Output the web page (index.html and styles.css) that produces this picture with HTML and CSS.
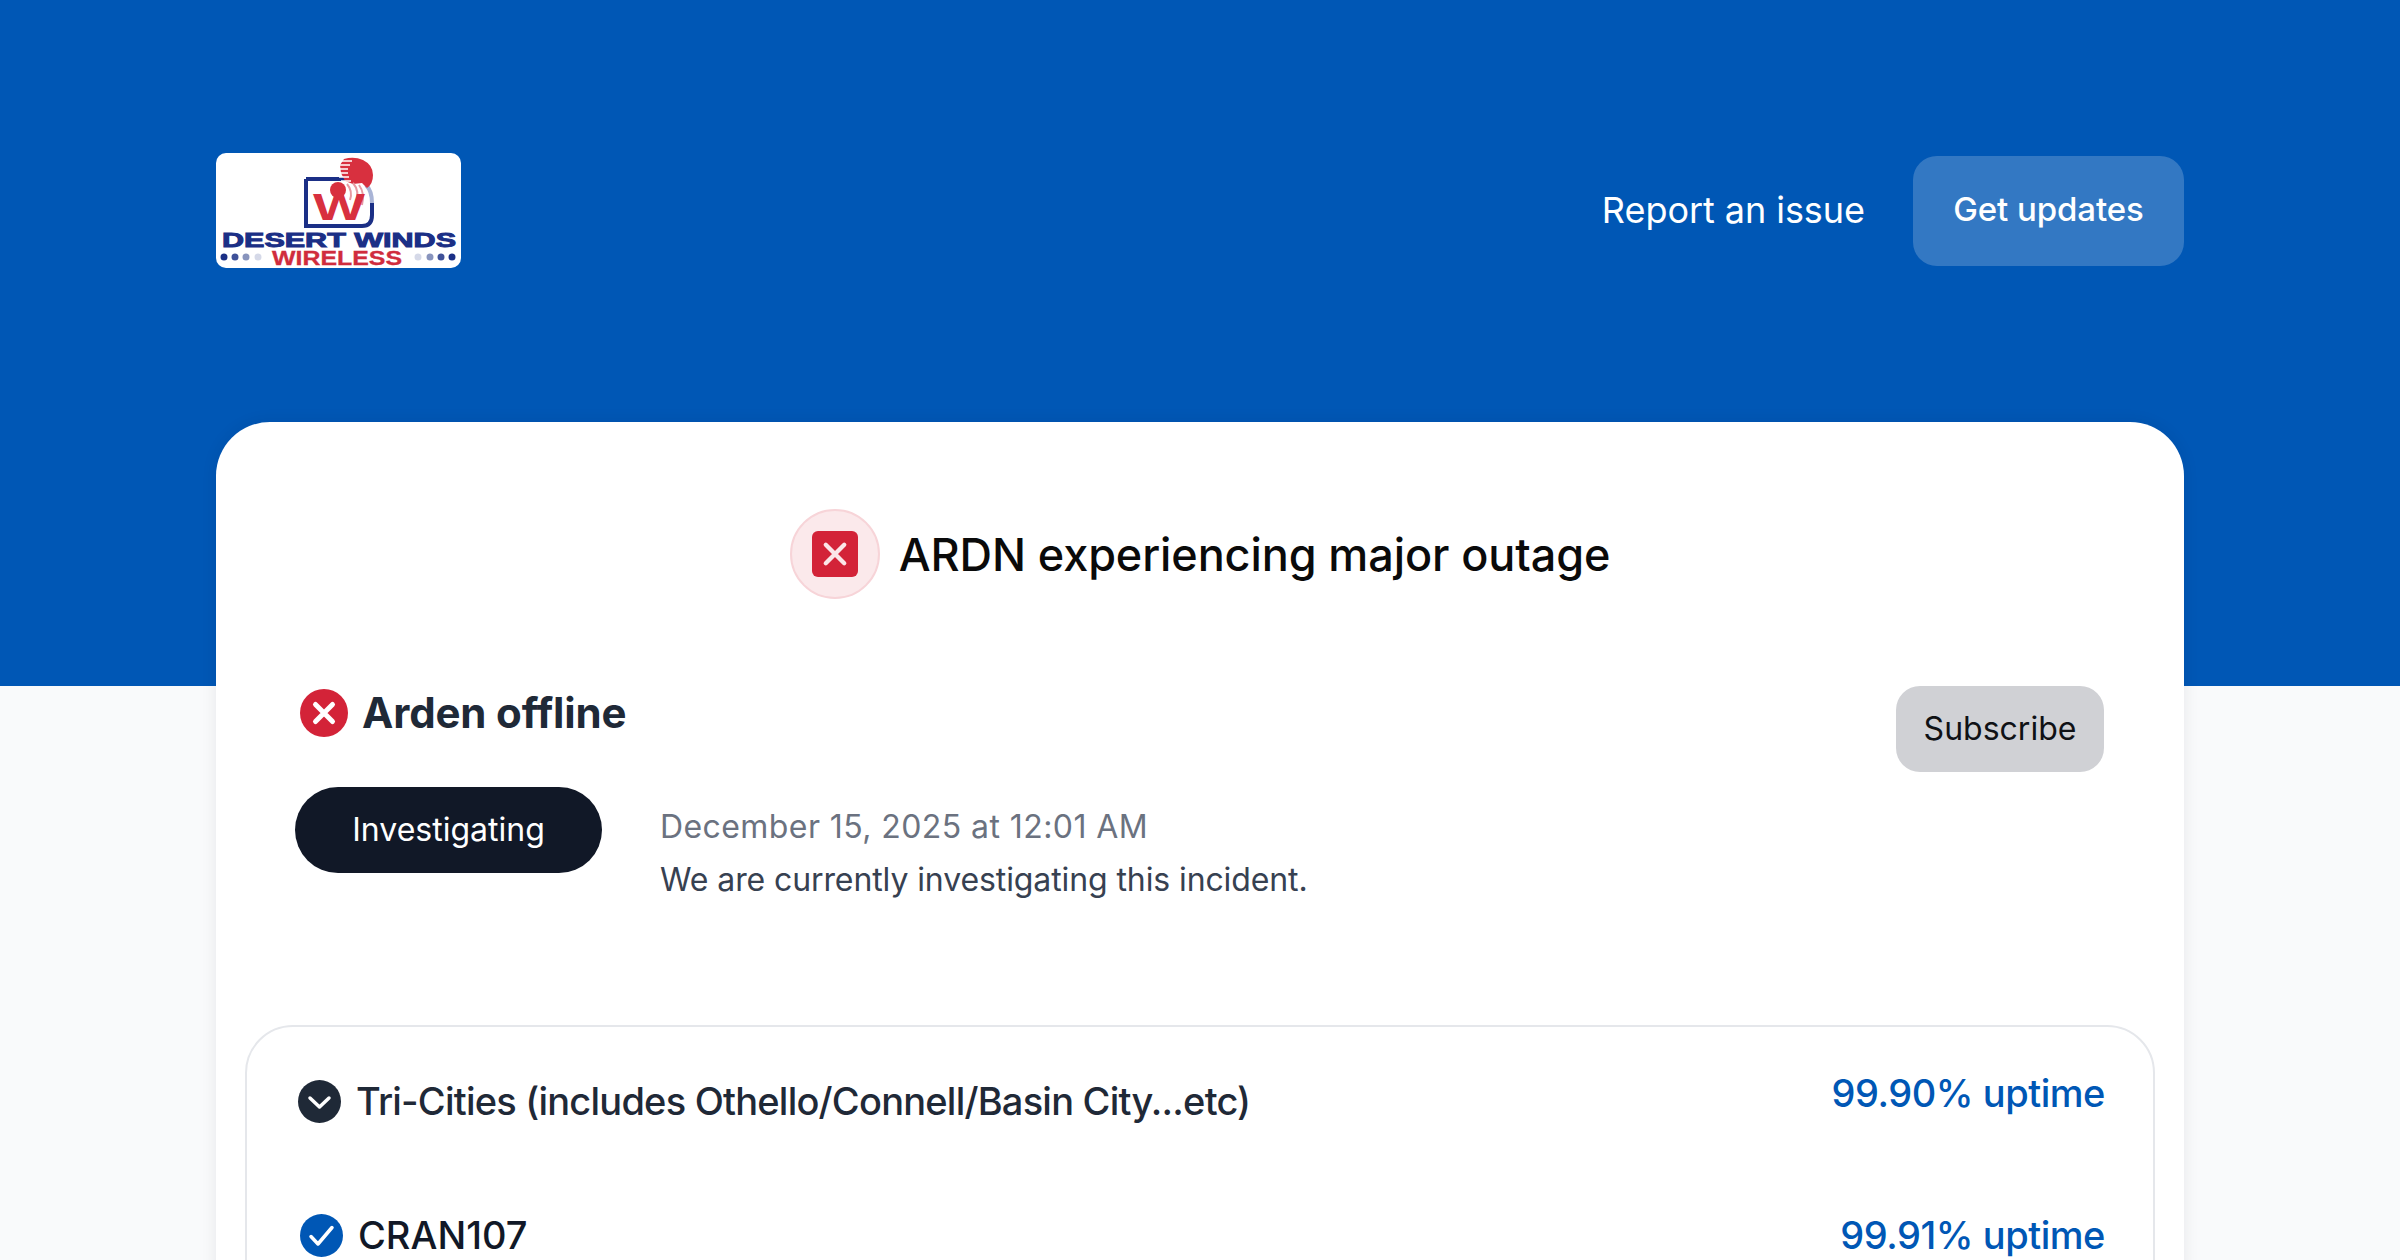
FILE: index.html
```html
<!DOCTYPE html>
<html lang="en">
<head>
<meta charset="utf-8">
<title>Desert Winds Wireless Status</title>
<link rel="stylesheet" href="styles.css">
</head>
<body>
<div class="page">
  <div class="hero">
    <header class="topbar">
      <a class="logo" href="#">
        <svg class="logo-svg" viewBox="0 0 244 115" width="244" height="115">
          <path class="lg-navy-line" d="M90 26H134M90 26V73H146Q156 73 156 62V50"/>
          <path class="lg-fade" d="M150 32Q156 38 156 50"/>
          <path class="lg-red" d="M128 6Q138 3 147 7Q157 12 157 22Q157 31 151 35L146 30L137 31L129 28L125 20L124 12Z"/>
          <path class="lg-comb" d="M124 8H136M123 12H134M122 16H132M122 20H132M123 24H133M125 28H135"/>
          <path class="lg-wave" d="M131 31Q137 38 134 47M137 30Q144 38 140 50M143 32Q149 40 146 52"/>
          <circle class="lg-red" cx="122" cy="37" r="8"/>
          <text class="lg-w" x="123" y="67" text-anchor="middle" textLength="52" lengthAdjust="spacingAndGlyphs">W</text>
          <text class="lg-t1" x="6" y="94" textLength="234" lengthAdjust="spacingAndGlyphs">DESERT WINDS</text>
          <text class="lg-t2" x="56" y="112" textLength="130" lengthAdjust="spacingAndGlyphs">WIRELESS</text>
          <circle class="lg-d1" cx="8" cy="104" r="3.5"/><circle class="lg-d2" cx="19" cy="104" r="3.5"/><circle class="lg-d3" cx="30" cy="104" r="3.5"/><circle class="lg-d4" cx="42" cy="104" r="3.5"/>
          <circle class="lg-d4" cx="202" cy="104" r="3.5"/><circle class="lg-d3" cx="214" cy="104" r="3.5"/><circle class="lg-d2" cx="225" cy="104" r="3.5"/><circle class="lg-d1" cx="236" cy="104" r="3.5"/>
        </svg>
      </a>
      <nav class="nav">
        <a class="nav-link" href="#">Report an issue</a>
        <a class="nav-btn" href="#">Get updates</a>
      </nav>
    </header>
  </div>
  <main class="card">
    <div class="status">
      <span class="status-ring">
        <span class="status-square">
          <svg viewBox="0 0 24 24" width="26" height="26"><path class="x-stroke" d="M3.500 3.500L20.500 20.500M20.500 3.500L3.500 20.500"/></svg>
        </span>
      </span>
      <h1 class="status-title">ARDN experiencing major outage</h1>
    </div>
    <section class="incident">
      <div class="incident-body">
        <h2 class="incident-title">
          <svg class="incident-icon" viewBox="0 0 48 48" width="48" height="48"><circle class="fill-red" cx="24" cy="24" r="24"/><path class="x-stroke-2" d="M15.500 15.500L32.500 32.500M32.500 15.500L15.500 32.500"/></svg>
          Arden offline
        </h2>
        <div class="update">
          <span class="pill">Investigating</span>
          <div class="update-text">
            <div class="update-date">December 15, 2025 at 12:01 AM</div>
            <div class="update-msg">We are currently investigating this incident.</div>
          </div>
        </div>
      </div>
      <a class="subscribe" href="#">Subscribe</a>
    </section>
    <section class="uptime-box">
      <div class="row row-first">
        <div class="row-name row-name-group">
          <svg viewBox="0 0 43 43" width="43" height="43"><circle class="fill-dark" cx="21.5" cy="21.5" r="21.5"/><path class="tick" d="M12 18L21.500 27L31 18"/></svg>
          <span>Tri-Cities (includes Othello/Connell/Basin City...etc)</span>
        </div>
        <span class="row-uptime">99.90% uptime</span>
      </div>
      <div class="row row-second">
        <div class="row-name row-name-item">
          <svg viewBox="0 0 43 43" width="43" height="43"><circle class="fill-blue" cx="21.500" cy="21.500" r="21.500"/><path class="tick" d="M11 22.500L18 30L32 13.500"/></svg>
          <span>CRAN107</span>
        </div>
        <span class="row-uptime">99.91% uptime</span>
      </div>
    </section>
  </main>
</div>
</body>
</html>
```
FILE: styles.css
```css
* { box-sizing: border-box; }
html, body { margin: 0; height: 1260px; overflow: hidden; }
body { background: #f9fafb; font-family: Inter, "Liberation Sans", sans-serif; color: #1f2937; }
a { text-decoration: none; color: inherit; }
h1, h2 { margin: 0; }

.page { width: 2400px; height: 1260px; overflow: hidden; }
.hero { background: #0057b5; height: 686px; padding: 153px 216px 0; }
.topbar { display: flex; justify-content: space-between; align-items: center; height: 115px; }
.logo { display: block; width: 245px; height: 115px; background: #fff; border-radius: 10px; overflow: hidden; }
.logo-svg { display: block; }
.lg-navy-line { fill: none; stroke: #1b2f86; stroke-width: 4; }
.lg-fade { fill: none; stroke: #a9b4d6; stroke-width: 4; }
.lg-red { fill: #d8303f; }
.lg-comb { fill: none; stroke: #fff; stroke-width: 1.300; }
.lg-wave { fill: none; stroke: #e79aa2; stroke-width: 2; }
.lg-w { font: 700 36px "Liberation Sans", sans-serif; fill: #d8303f; }
.lg-t1 { font: 700 21px "Liberation Sans", sans-serif; fill: #1b2f86; stroke: #1b2f86; stroke-width: 1; }
.lg-t2 { font: 700 21px "Liberation Sans", sans-serif; fill: #d02c3d; stroke: #d02c3d; stroke-width: .3; }
.lg-d1 { fill: #1b2f86; }
.lg-d2 { fill: #3f5199; }
.lg-d3 { fill: #8894bd; }
.lg-d4 { fill: #d5d9e8; }

.nav { display: flex; align-items: center; gap: 48px; color: #fff; font-size: 36px; }
.nav-link { line-height: 44px; padding-bottom: 2px; letter-spacing: -.05px; }
.nav-btn { display: flex; align-items: center; justify-content: center; width: 271px; height: 110px; background: rgba(255,255,255,.2); border-radius: 24px; font-size: 33px; font-weight: 500; padding-bottom: 4px; letter-spacing: -.1px; }

.card { width: 1968px; margin: -264px auto 0; height: 900px; background: #fff; border-radius: 54px 54px 0 0; box-shadow: 0 0 16px rgba(17,24,39,.08); padding-top: 87px; position: relative; }
.status { display: flex; align-items: center; justify-content: center; gap: 19px; height: 90px; }
.status-ring { display: flex; align-items: center; justify-content: center; width: 90px; height: 90px; border-radius: 50%; background: #fbe9eb; border: 2px solid #f7d4d8; }
.status-square { display: flex; align-items: center; justify-content: center; width: 46px; height: 46px; background: #d32338; border-radius: 6px; }
.x-stroke { fill: none; stroke: #fbe6e8; stroke-width: 4; stroke-linecap: round; }
.status-title { font-size: 45px; font-weight: 500; line-height: 54px; color: #0a0a0a; letter-spacing: -.1px; padding-top: 2px; }

.incident { display: flex; justify-content: space-between; align-items: flex-start; padding: 87px 80px 0; }
.incident-title { display: flex; align-items: center; gap: 14px; font-size: 42px; font-weight: 700; line-height: 54px; color: #1f2937; padding-left: 4px; letter-spacing: -.15px; }
.x-stroke-2 { fill: none; stroke: #fff; stroke-width: 5; stroke-linecap: round; }
.fill-red { fill: #d32338; }
.fill-dark { fill: #1f2937; }
.fill-blue { fill: #0057b5; }
.tick { fill: none; stroke: #fff; stroke-width: 3.500; stroke-linecap: round; stroke-linejoin: round; }
.incident-icon { flex: none; }
.update { display: flex; gap: 58px; margin-top: 47px; margin-left: -1px; }
.pill { display: flex; align-items: center; justify-content: center; width: 307px; height: 86px; border-radius: 43px; background: #111827; color: #fff; font-size: 32px; padding-bottom: 2px; }
.update-text { padding-top: 13px; font-size: 32px; line-height: 53px; }
.update-date { color: #6b7280; letter-spacing: .42px; }
.update-msg { color: #374151; letter-spacing: -.1px; }
.subscribe { display: flex; align-items: center; justify-content: center; width: 208px; height: 86px; background: #d0d1d5; border-radius: 24px; font-size: 32px; color: #0f1115; padding-bottom: 2px; }

.uptime-box { margin: 119px 29px 0 29px; height: 400px; border: 2px solid #e5e7eb; border-radius: 48px; padding: 0 48px 0 50px; }
.row { display: flex; justify-content: space-between; align-items: flex-start; }
.row-first { padding-top: 53px; }
.row-second { padding-top: 91px; }
.row-name { display: flex; align-items: center; gap: 15px; font-size: 38px; font-weight: 500; line-height: 43px; color: #1f2937; }
.row-name-group { padding-left: 1px; letter-spacing: -.78px; }
.row-name-item { padding-left: 3px; color: #111827; letter-spacing: 0; }
.row-uptime { font-size: 38px; font-weight: 500; line-height: 43px; color: #0057b5; letter-spacing: -.45px; }
.row-first .row-uptime { margin-top: -8px; }
.row-second .row-uptime { margin-top: 0; }
```
